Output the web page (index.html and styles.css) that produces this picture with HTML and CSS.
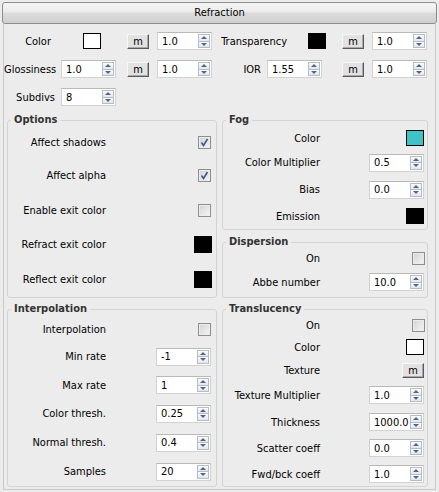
FILE: index.html
```html
<!DOCTYPE html>
<html lang="en">
<head>
    <meta charset="UTF-8">
    <title>Refraction</title>
    <link rel="stylesheet" href="styles.css">
</head>
<body>
    <div class="rollout">
        <div class="rollout-head">Refraction</div>

        <div class="rollout-body">
            <!-- top parameters -->
            <div class="top-row">
                <span class="tlabel tl-color">Color</span>
                <span class="sw white sw-color"></span>
                <button class="mbtn after-sw">m</button>
                <div class="spin"><span class="val">1.0</span><span class="arrows"><i class="up"></i><i class="dn"></i></span></div>
                <span class="tlabel tl-transp">Transparency</span>
                <span class="sw black sw-transp"></span>
                <button class="mbtn after-sw2">m</button>
                <div class="spin"><span class="val">1.0</span><span class="arrows"><i class="up"></i><i class="dn"></i></span></div>
            </div>
            <div class="top-row">
                <span class="tlabel tl-left">Glossiness</span>
                <div class="spin"><span class="val">1.0</span><span class="arrows"><i class="up"></i><i class="dn"></i></span></div>
                <button class="mbtn">m</button>
                <div class="spin"><span class="val">1.0</span><span class="arrows"><i class="up"></i><i class="dn"></i></span></div>
                <span class="tlabel tl-ior">IOR</span>
                <div class="spin"><span class="val">1.55</span><span class="arrows"><i class="up"></i><i class="dn"></i></span></div>
                <button class="mbtn wide-gap">m</button>
                <div class="spin"><span class="val">1.0</span><span class="arrows"><i class="up"></i><i class="dn"></i></span></div>
            </div>
            <div class="top-row">
                <span class="tlabel tl-left">Subdivs</span>
                <div class="spin"><span class="val">8</span><span class="arrows"><i class="up"></i><i class="dn"></i></span></div>
            </div>

            <!-- groups -->
            <div class="groups">
                <fieldset class="group options">
                    <legend>Options</legend>
                    <div class="rows">
                        <div class="row"><span class="lbl">Affect shadows</span><span class="ctl"><span class="chk"><svg width="11" height="11" viewBox="0 0 11 11"><path d="M2.5 5.5 L4.5 8.5 L8.5 2" fill="none" stroke="#42568c" stroke-width="1.6"/></svg></span></span></div>
                        <div class="row"><span class="lbl">Affect alpha</span><span class="ctl"><span class="chk"><svg width="11" height="11" viewBox="0 0 11 11"><path d="M2.5 5.5 L4.5 8.5 L8.5 2" fill="none" stroke="#42568c" stroke-width="1.6"/></svg></span></span></div>
                        <div class="row"><span class="lbl">Enable exit color</span><span class="ctl"><span class="chk"></span></span></div>
                        <div class="row"><span class="lbl">Refract exit color</span><span class="ctl"><span class="sw black tall"></span></span></div>
                        <div class="row"><span class="lbl">Reflect exit color</span><span class="ctl"><span class="sw black tall"></span></span></div>
                    </div>
                </fieldset>

                <div class="stack">
                    <fieldset class="group r fog">
                        <legend>Fog</legend>
                        <div class="rows">
                            <div class="row"><span class="lbl">Color</span><span class="ctl"><span class="sw teal"></span></span></div>
                            <div class="row"><span class="lbl">Color Multiplier</span><span class="ctl"><span class="spin"><span class="val">0.5</span><span class="arrows"><i class="up"></i><i class="dn"></i></span></span></span></div>
                            <div class="row"><span class="lbl">Bias</span><span class="ctl"><span class="spin"><span class="val">0.0</span><span class="arrows"><i class="up"></i><i class="dn"></i></span></span></span></div>
                            <div class="row"><span class="lbl">Emission</span><span class="ctl"><span class="sw black"></span></span></div>
                        </div>
                    </fieldset>
                    <fieldset class="group r dispersion">
                        <legend>Dispersion</legend>
                        <div class="rows">
                            <div class="row"><span class="lbl">On</span><span class="ctl"><span class="chk"></span></span></div>
                            <div class="row"><span class="lbl">Abbe number</span><span class="ctl"><span class="spin"><span class="val">10.0</span><span class="arrows"><i class="up"></i><i class="dn"></i></span></span></span></div>
                        </div>
                    </fieldset>
                </div>

                <fieldset class="group interp">
                    <legend>Interpolation</legend>
                    <div class="rows">
                        <div class="row"><span class="lbl">Interpolation</span><span class="ctl"><span class="chk"></span></span></div>
                        <div class="row"><span class="lbl">Min rate</span><span class="ctl"><span class="spin"><span class="val">-1</span><span class="arrows"><i class="up"></i><i class="dn"></i></span></span></span></div>
                        <div class="row"><span class="lbl">Max rate</span><span class="ctl"><span class="spin"><span class="val">1</span><span class="arrows"><i class="up"></i><i class="dn"></i></span></span></span></div>
                        <div class="row"><span class="lbl">Color thresh.</span><span class="ctl"><span class="spin"><span class="val">0.25</span><span class="arrows"><i class="up"></i><i class="dn"></i></span></span></span></div>
                        <div class="row"><span class="lbl">Normal thresh.</span><span class="ctl"><span class="spin"><span class="val">0.4</span><span class="arrows"><i class="up"></i><i class="dn"></i></span></span></span></div>
                        <div class="row"><span class="lbl">Samples</span><span class="ctl"><span class="spin"><span class="val">20</span><span class="arrows"><i class="up"></i><i class="dn"></i></span></span></span></div>
                    </div>
                </fieldset>

                <fieldset class="group r transl">
                    <legend>Translucency</legend>
                    <div class="rows">
                        <div class="row"><span class="lbl">On</span><span class="ctl"><span class="chk"></span></span></div>
                        <div class="row"><span class="lbl">Color</span><span class="ctl"><span class="sw white"></span></span></div>
                        <div class="row"><span class="lbl">Texture</span><span class="ctl"><button class="mbtn">m</button></span></div>
                        <div class="row"><span class="lbl">Texture Multiplier</span><span class="ctl"><span class="spin"><span class="val">1.0</span><span class="arrows"><i class="up"></i><i class="dn"></i></span></span></span></div>
                        <div class="row"><span class="lbl">Thickness</span><span class="ctl"><span class="spin"><span class="val">1000.0</span><span class="arrows"><i class="up"></i><i class="dn"></i></span></span></span></div>
                        <div class="row"><span class="lbl">Scatter coeff</span><span class="ctl"><span class="spin"><span class="val">0.0</span><span class="arrows"><i class="up"></i><i class="dn"></i></span></span></span></div>
                        <div class="row"><span class="lbl">Fwd/bck coeff</span><span class="ctl"><span class="spin"><span class="val">1.0</span><span class="arrows"><i class="up"></i><i class="dn"></i></span></span></span></div>
                    </div>
                </fieldset>
            </div>
        </div>
    </div>
</body>
</html>
```

FILE: styles.css
```css
* {
    box-sizing: border-box;
}

body {
    margin: 0;
    background: #ececec;
    font-family: "DejaVu Sans Condensed", "Liberation Sans", sans-serif;
    font-size: 11px;
    color: #000;
}

.rollout {
    width: 439px;
    height: 492px;
    padding: 2px 0 0 2px;
}

/* rollout title bar */
.rollout-head {
    width: 435px;
    height: 22px;
    border: 1px solid #8d8d8d;
    border-radius: 3px;
    background: linear-gradient(180deg, #f5f5f5 0%, #ebebeb 45%, #dcdcdc 50%, #d0d0d0 100%);
    text-align: center;
    line-height: 20px;
}

.rollout-body {
    width: 433px;
    height: 466px;
    margin-left: 1px;
    border: 1px solid #c9c9c9;
    border-top: none;
    padding-top: 8px;
}

/* top rows */
.top-row {
    display: flex;
    align-items: center;
    height: 18px;
}

.top-row + .top-row {
    margin-top: 10px;
}

.tlabel {
    text-align: right;
    white-space: nowrap;
    flex: none;
}

.tl-color { width: 47px; }
.tl-left { width: 51px; }
.tl-transp { width: 75px; }
.tl-ior { width: 49px; }

.tlabel + .spin { margin-left: 6px; }
.sw-color { margin-left: 32px; }
.sw-transp { margin-left: 21px; }
.top-row .mbtn { margin-left: 11px; }
.top-row .mbtn.after-sw { margin-left: 26px; }
.top-row .mbtn.after-sw2 { margin-left: 16px; }
.top-row .mbtn.wide-gap { margin-left: 20px; }
.mbtn + .spin { margin-left: 8px; }

/* controls */
.spin {
    display: flex;
    align-items: center;
    flex: none;
    width: 55px;
    height: 18px;
    padding-left: 4px;
    background: #fff;
    border: 1px solid #d2d2d2;
    border-top-color: #b9b9b9;
}

.spin .val {
    flex: 1;
    white-space: nowrap;
}

.arrows {
    display: flex;
    flex-direction: column;
    width: 12px;
    height: 14px;
    margin-right: 1px;
}

.arrows i {
    flex: 1;
    display: flex;
    align-items: center;
    justify-content: center;
    border: 1px solid #b4bccb;
    background: linear-gradient(180deg, #fdfdfd, #e2e6ec);
}

.arrows .dn {
    border-top: none;
}

.arrows i::before {
    content: "";
    border-left: 3px solid transparent;
    border-right: 3px solid transparent;
}

.arrows .up::before { border-bottom: 3px solid #55647f; }
.arrows .dn::before { border-top: 3px solid #55647f; }

.mbtn {
    flex: none;
    width: 22px;
    height: 15px;
    padding: 0;
    font: inherit;
    line-height: 11px;
    color: #000;
    background: #e2e2e2;
    border: 1px solid;
    border-color: #f7f7f7 #5a5a5a #5a5a5a #f7f7f7;
    box-shadow: inset -1px -1px 0 #a9a9a9;
}

.sw {
    flex: none;
    display: inline-block;
    width: 18px;
    height: 16px;
    border: 1px solid #000;
}

.sw.white { background: #fff; }
.sw.black { background: #000; }
.sw.teal { background: #3fc3c6; }
.sw.tall { height: 17px; margin-right: -1px; }

.chk {
    display: flex;
    align-items: center;
    justify-content: center;
    width: 13px;
    height: 13px;
    border: 1px solid #8f8f8f;
    background: linear-gradient(135deg, #d2d2d2, #f6f6f6);
    box-shadow: inset 0 0 0 1px #ececec;
}

/* groups */
.groups {
    display: grid;
    grid-template-columns: 210px 206px;
    column-gap: 5px;
    row-gap: 4px;
    margin: 7px 0 0 3px;
}

.stack {
    display: flex;
    flex-direction: column;
    gap: 5px;
}

.group {
    margin: 0;
    padding: 0;
    min-width: 0;
    border: 1px solid #d3d3d3;
    border-radius: 3px;
}

.group legend {
    margin-left: 3px;
    padding: 0 3px;
    font-weight: bold;
    line-height: 14px;
    color: #333;
}

.rows {
    display: grid;
}

.options .rows { grid-template-rows: 31px 35px 34px 34px 36px; }
.fog .rows { grid-template-rows: 22px 27px 27px 26px; }
.dispersion .rows { grid-template-rows: 18px 30px; }
.interp .rows { grid-template-rows: 26px 29px 28px 29px 29px 29px; }
.transl .rows { grid-template-rows: 18px 26px 20px 30px 24px 28px 24px; }

.row {
    display: flex;
    align-items: center;
}

.lbl {
    width: 98px;
    text-align: right;
    white-space: nowrap;
}

.r .lbl {
    width: 97px;
}

.ctl {
    flex: 1;
    display: flex;
    justify-content: flex-end;
    padding-right: 5px;
}

.r .ctl {
    padding-right: 3px;
}

.r .chk {
    margin-right: -1px;
}
```
